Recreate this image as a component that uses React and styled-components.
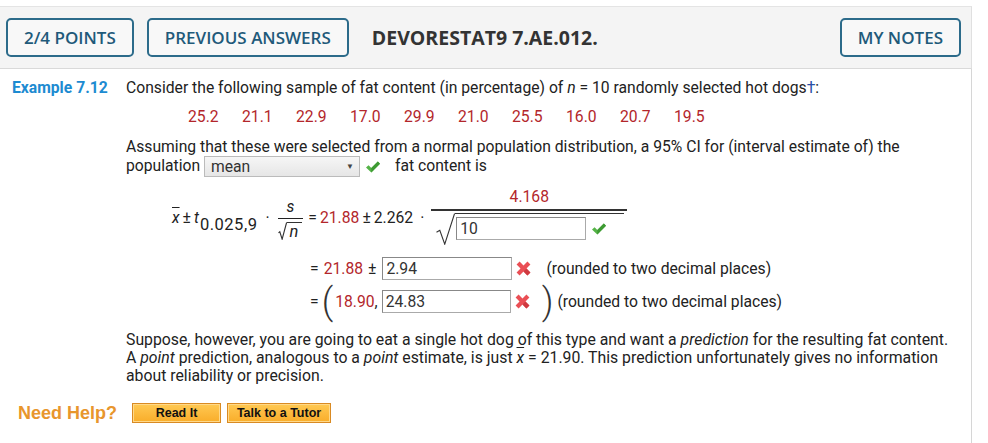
import React from 'react'
import styled, { createGlobalStyle } from 'styled-components'

const GlobalStyle = createGlobalStyle`
  html, body { margin: 0; padding: 0; background: #fff; }
  body { font-family: Roboto, "Liberation Sans", Arial, sans-serif; color: #222; }
`

const samples = ['25.2', '21.1', '22.9', '17.0', '29.9', '21.0', '25.5', '16.0', '20.7', '19.5']

function Check() {
  return (
    <CheckIcon viewBox="0 0 16 14">
      <path d="M1 7.5 L3.6 5.2 L6.3 8 L12.8 1.5 L15 3.7 L6.3 12.5 Z" fill="#55b347" />
      <path d="M6.3 8 L12.8 1.5 L15 3.7 L6.3 12.5 Z" fill="#3d9a33" />
    </CheckIcon>
  )
}

function Cross() {
  return (
    <CrossIcon viewBox="0 0 16 16">
      <path d="M1.5 4.3 L4.3 1.5 L8 5.2 L11.7 1.5 L14.5 4.3 L10.8 8 L14.5 11.7 L11.7 14.5 L8 10.8 L4.3 14.5 L1.5 11.7 L5.2 8 Z" fill="#ea4f55" />
      <path d="M8 10.8 L11.7 14.5 L14.5 11.7 L10.8 8 Z" fill="#cf3a40" />
    </CrossIcon>
  )
}

// radical sign drawn as a stroke; the bar over the radicand is the radicand's border
function RadicalSign({ w, h }) {
  return (
    <RadicalSvg width={w} height={h} viewBox={`0 0 ${w} ${h}`} preserveAspectRatio="none">
      <path
        d={`M0.5 ${h * 0.6} L${w * 0.2} ${h * 0.54} L${w * 0.46} ${h - 0.8} L${w - 0.4} 0.5`}
        fill="none"
        stroke="#333"
        strokeWidth="1.1"
      />
    </RadicalSvg>
  )
}

function App() {
  return (
    <>
      <GlobalStyle />
      <Page>
        <Header>
          <OutlineButton>2/4 POINTS</OutlineButton>
          <OutlineButton>PREVIOUS ANSWERS</OutlineButton>
          <Title>DEVORESTAT9 7.AE.012.</Title>
          <Spacer />
          <OutlineButton>MY NOTES</OutlineButton>
        </Header>

        <Content>
          <ExampleRow>
            <Label>Example 7.12</Label>
            <Body>
              <Line>
                Consider the following sample of fat content (in percentage) of <i>n</i> = 10 randomly selected hot dogs<Dagger>†</Dagger>:
              </Line>
              <Samples>
                {samples.map((s, i) => <Sample key={i}>{s}</Sample>)}
              </Samples>
              <Para>
                Assuming that these were selected from a normal population distribution, a 95% CI for (interval estimate of) the
                <br />
                population <Select>mean<Arrow>▼</Arrow></Select><Check /><FatText>fat content is</FatText>
              </Para>

              <Formula>
                <Xbar>x</Xbar>
                <Op>±</Op>
                <Italic>t</Italic><Sub>0.025,9</Sub>
                <Dot>·</Dot>
                <SmallFrac>
                  <Num><Italic>s</Italic></Num>
                  <Den>
                    <RadicalSign w={9} h={18} />
                    <Radicand><Italic>n</Italic></Radicand>
                  </Den>
                </SmallFrac>
                <Op $l={5}>=</Op>
                <Red>21.88</Red>
                <Op>±</Op>
                <span>2.262</span>
                <Dot $m={7}>·</Dot>
                <BigFrac>
                  <BigNum><Red>4.168</Red></BigNum>
                  <BigDen>
                    <RadicalSign w={19} h={32} />
                    <BigRadicand>
                      <AnswerBox $w={130}>10</AnswerBox>
                      <Check />
                    </BigRadicand>
                  </BigDen>
                </BigFrac>
              </Formula>

              <ResultRow>
                <Op $l={0} $r={5}>=</Op>
                <Red>21.88</Red>
                <Op $l={5} $r={6}>±</Op>
                <AnswerBox $w={130}>2.94</AnswerBox>
                <Cross />
                <Note>(rounded to two decimal places)</Note>
              </ResultRow>
              <ResultRow $tall>
                <Op $l={0} $r={4}>=</Op>
                <Paren>(</Paren>
                <Red>18.90</Red>,
                <AnswerBox $w={129} $ml={4}>24.83</AnswerBox>
                <Cross />
                <Paren $close>)</Paren>
                <Note $tight>(rounded to two decimal places)</Note>
              </ResultRow>

              <Paragraph>
                Suppose, however, you are going to eat a single hot dog of this type and want a <i>prediction</i> for the resulting fat content.
                <br />
                A <i>point</i> prediction, analogous to a <i>point</i> estimate, is just <Xbar>x</Xbar> = 21.90. This prediction unfortunately gives no information
                <br />
                about reliability or precision.
              </Paragraph>
            </Body>
          </ExampleRow>

          <HelpRow>
            <HelpLabel>Need Help?</HelpLabel>
            <HelpButton $w={89}>Read It</HelpButton>
            <HelpButton $w={104}>Talk to a Tutor</HelpButton>
          </HelpRow>
        </Content>
      </Page>
    </>
  )
}

const Page = styled.div`
  width: 972px;
  min-height: 443px;
  box-sizing: border-box;
  padding-top: 6px;
`

const Header = styled.div`
  height: 63px;
  box-sizing: border-box;
  display: flex;
  align-items: center;
  gap: 13px;
  padding: 0 10px 0 6px;
  background: #f4f4f4;
  border-top: 1px solid #e4e4e4;
  border-bottom: 1px solid #d9d9d9;
  border-right: 1px solid #e0e0e0;
`

const OutlineButton = styled.div`
  height: 39px;
  box-sizing: border-box;
  display: flex;
  align-items: center;
  padding: 0 16px;
  border: 2px solid #2c6b8a;
  border-radius: 5px;
  background: #f8f8f8;
  color: #1f5a7a;
  font-family: "Open Sans", "Liberation Sans", sans-serif;
  font-size: 17px;
  font-weight: 600;
`

const Title = styled.div`
  margin-left: 10px;
  font-family: "Open Sans", "Liberation Sans", sans-serif;
  font-size: 19.5px;
  font-weight: 700;
  color: #333;
`

const Spacer = styled.div`
  flex: 1;
`

const Content = styled.div`
  border-right: 1px solid #d6d6d6;
  min-height: 374px;
  padding-top: 9px;
  font-size: 15.7px;
`

const ExampleRow = styled.div`
  display: flex;
`

const Label = styled.div`
  width: 114px;
  padding-left: 12px;
  flex-shrink: 0;
  color: #1d8bd1;
  font-weight: 700;
  line-height: 19px;
`

const Body = styled.div`
  flex: 1;
  line-height: 19px;
`

const Line = styled.div``

const Dagger = styled.span`
  color: #2a4fa8;
`

const Samples = styled.div`
  display: flex;
  margin: 10px 0 0 62px;
  color: #b3262b;
  line-height: 19px;
`

const Sample = styled.span`
  width: 54px;
`

const Para = styled.div`
  margin-top: 11px;
  line-height: 19px;
`

const Select = styled.span`
  display: inline-flex;
  align-items: center;
  justify-content: space-between;
  vertical-align: middle;
  width: 156px;
  height: 21px;
  box-sizing: border-box;
  margin: -1px 0 0 0;
  padding: 0 5px 0 6px;
  border: 1px solid #bbb;
  background: linear-gradient(#f6f6f6, #e6e6e6);
  color: #333;
`

const Arrow = styled.span`
  font-size: 8px;
  color: #444;
`

const CheckIcon = styled.svg`
  width: 16px;
  height: 14px;
  margin: 0 5px 0 5px;
  vertical-align: middle;
  flex-shrink: 0;
`

const CrossIcon = styled.svg`
  width: 17px;
  height: 17px;
  margin: 0 3px;
  flex-shrink: 0;
`

const FatText = styled.span`
  margin-left: 9px;
`

const Formula = styled.div`
  display: flex;
  align-items: center;
  margin: 11px 0 0 46px;
  height: 60px;
  white-space: nowrap;
`

const Xbar = styled.span`
  font-style: italic;
  text-decoration: overline;
`

const Italic = styled.span`
  font-style: italic;
`

const Op = styled.span`
  margin: 0 ${p => (p.$r ?? 3)}px 0 ${p => (p.$l ?? 3)}px;
`

const Sub = styled.span`
  font-size: 16.5px;
  position: relative;
  top: 7px;
  margin-left: 1px;
  letter-spacing: 0.5px;
`

const Dot = styled.span`
  margin: 0 ${p => p.$m ?? 8}px;
`

const SmallFrac = styled.span`
  display: inline-flex;
  flex-direction: column;
  align-items: center;
  margin-top: 2px;
`

const Num = styled.span`
  align-self: stretch;
  text-align: center;
  padding-bottom: 2px;
  border-bottom: 1px solid #222;
  line-height: 18px;
`

const Den = styled.span`
  display: flex;
  align-items: stretch;
  margin-top: 3px;
  padding-right: 1px;
`

const RadicalSvg = styled.svg`
  display: block;
  flex-shrink: 0;
`

const Radicand = styled.span`
  border-top: 1px solid #333;
  padding: 0 4px 0 3px;
  line-height: 17px;
  font-size: 16.5px;
`

const Red = styled.span`
  color: #b3262b;
`

const BigFrac = styled.span`
  display: inline-flex;
  flex-direction: column;
  align-items: stretch;
  margin-top: -4px;
`

const BigNum = styled.span`
  text-align: center;
  padding: 0 0 3px 0;
  border-bottom: 2px solid #333;
  line-height: 19px;
`

const BigDen = styled.span`
  display: flex;
  align-items: stretch;
  padding: 2px 3px 0 5px;
`

const BigRadicand = styled.span`
  display: flex;
  align-items: center;
  border-top: 1px solid #333;
  padding: 3px 12px 4px 1px;
`

const AnswerBox = styled.span`
  display: inline-flex;
  align-items: center;
  flex-shrink: 0;
  width: ${p => p.$w}px;
  height: 23px;
  box-sizing: border-box;
  margin-left: ${p => p.$ml || 0}px;
  padding-left: 3px;
  border: 1px solid #aaa;
  border-left-color: #888;
  border-top-color: #888;
  background: #fff;
  color: #333;
`

const ResultRow = styled.div`
  display: flex;
  align-items: center;
  margin-left: 184px;
  height: ${p => (p.$tall ? '34px' : '24px')};
  margin-top: ${p => (p.$tall ? '4px' : '9px')};
  white-space: nowrap;
`

const Paren = styled.span`
  font-size: 36px;
  font-weight: 300;
  line-height: 34px;
  margin: ${p => (p.$close ? '0 4px 0 8px' : '0 2px 0 -1px')};
  color: #333;
`

const Note = styled.span`
  margin-left: ${p => (p.$tight ? '0' : '11px')};
`

const Paragraph = styled.p`
  margin: 12px 0 0;
  font-size: 15.8px;
  line-height: 18px;
  white-space: nowrap;
`

const HelpRow = styled.div`
  display: flex;
  align-items: center;
  gap: 6px;
  margin: 18px 0 0 18px;
`

const HelpLabel = styled.span`
  font-family: "Liberation Sans", Arial, sans-serif;
  font-weight: 700;
  font-size: 18px;
  color: #e8962d;
  margin-right: 9px;
`

const HelpButton = styled.span`
  width: ${p => p.$w}px;
  height: 20px;
  box-sizing: border-box;
  display: flex;
  align-items: center;
  justify-content: center;
  border: 1px solid #d98a23;
  box-shadow: inset 0 0 0 1px #ffd98a;
  background: linear-gradient(#ffc953, #f9ad2a);
  font-family: "Liberation Sans", Arial, sans-serif;
  font-size: 12.5px;
  font-weight: 700;
  color: #111;
`

export default App
